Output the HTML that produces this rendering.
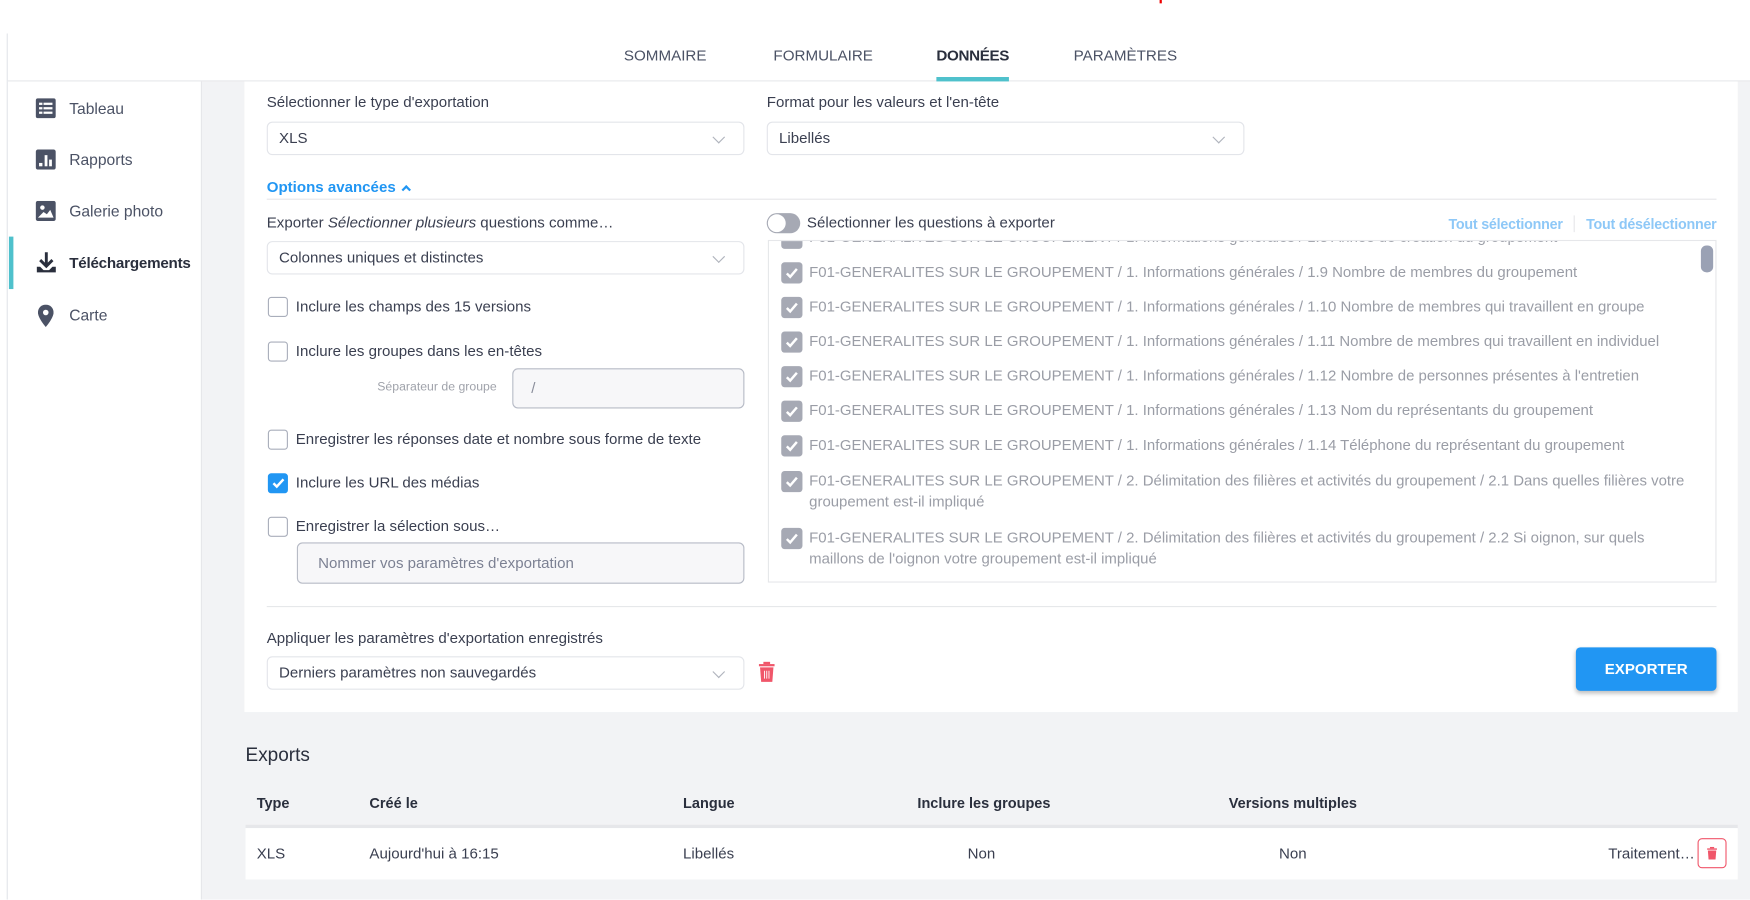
<!DOCTYPE html>
<html><head><meta charset="utf-8">
<style>
*{box-sizing:border-box;margin:0;padding:0}
html,body{width:1750px;height:899px;overflow:hidden;background:#fff}
#w{position:absolute;left:0;top:0;width:1568px;height:806px;transform:scale(1.11607);transform-origin:0 0;font-family:"Liberation Sans",sans-serif;color:#3a3f50;font-size:13.5px}
.a{position:absolute;white-space:nowrap}
.sel{position:absolute;border:1px solid #e3e5ea;border-radius:5px;background:#fff;height:30px;padding:0 10px;line-height:28px;color:#3a3f50}
.sel:after{content:"";position:absolute;right:18px;top:9px;width:7px;height:7px;border-right:1.3px solid #b0b4bd;border-bottom:1.3px solid #b0b4bd;transform:rotate(45deg)}
.cb{position:absolute;width:18px;height:18px;border:1.3px solid #a9aebb;border-radius:3px;background:#fff}
.cb.on{background:#2196f3;border-color:#2196f3}
.gc{position:absolute;width:19px;height:19px;border-radius:3px;background:#a6a9b4}
.gc svg,.cb svg{position:absolute;left:2px;top:2px}
.row{position:absolute;left:725px;color:#9a9da6;font-size:13.4px;white-space:nowrap}
.tab{position:absolute;top:42px;color:#4b5265;font-size:13.6px}
</style></head><body><div id="w">
<div class="a" style="left:1039px;top:0;width:2px;height:3px;background:#e00"></div>
<div class="a" style="left:6px;top:30px;width:1px;height:776px;background:#e3e5ea"></div>
<div class="a" style="left:7px;top:72px;width:1561px;height:1px;background:#e6e7ea"></div>
<!-- tabs -->
<div class="tab" style="left:559px">SOMMAIRE</div>
<div class="tab" style="left:693px">FORMULAIRE</div>
<div class="tab" style="left:839px;color:#2a2f3d;font-weight:bold;letter-spacing:-0.3px">DONNÉES</div>
<div class="tab" style="left:962px">PARAMÈTRES</div>
<div class="a" style="left:839px;top:69px;width:65px;height:4px;background:#4fc1cc"></div>
<!-- sidebar -->
<div class="a" style="left:180px;top:73px;width:1388px;height:733px;background:#f2f3f5"></div>
<div class="a" style="left:180px;top:73px;width:1px;height:733px;background:#e6e7ea"></div>
<div class="a" style="left:8px;top:212px;width:4px;height:47px;background:#4fc1cc"></div>
<svg class="a" style="left:32px;top:88px" width="18" height="18" viewBox="0 0 18 18"><rect width="18" height="18" rx="2" fill="#4b5265"/><g fill="#fff"><rect x="3" y="4" width="3" height="2"/><rect x="7" y="4" width="8" height="2"/><rect x="3" y="8" width="3" height="2"/><rect x="7" y="8" width="8" height="2"/><rect x="3" y="12" width="3" height="2"/><rect x="7" y="12" width="8" height="2"/></g></svg>
<div class="a" style="left:62px;top:89px;font-size:14px;color:#4b5265">Tableau</div>
<svg class="a" style="left:32px;top:134px" width="18" height="18" viewBox="0 0 18 18"><rect width="18" height="18" rx="2" fill="#4b5265"/><g fill="#fff"><rect x="3" y="12" width="3" height="3"/><rect x="8" y="5" width="2.5" height="10"/><rect x="12" y="9" width="2.5" height="6"/></g></svg>
<div class="a" style="left:62px;top:135px;font-size:14px;color:#4b5265">Rapports</div>
<svg class="a" style="left:32px;top:180px" width="18" height="18" viewBox="0 0 18 18"><rect width="18" height="18" rx="2" fill="#4b5265"/><circle cx="6" cy="6" r="2" fill="#fff"/><path d="M2 15 L7 10 L10 12 L13 8 L16 15Z" fill="#fff"/></svg>
<div class="a" style="left:62px;top:181px;font-size:14px;color:#4b5265">Galerie photo</div>
<svg class="a" style="left:32px;top:225px" width="19" height="20" viewBox="0 0 19 20"><path d="M9.5 1v12M4 8l5.5 5.5L15 8" stroke="#2a2f3d" stroke-width="2.6" fill="none"/><path d="M1 14v5h17v-5h-3l-3 3H7l-3-3z" fill="#2a2f3d"/></svg>
<div class="a" style="left:62px;top:228px;font-size:13.6px;font-weight:bold;color:#2a2f3d;letter-spacing:-0.2px">Téléchargements</div>
<svg class="a" style="left:34px;top:273px" width="14" height="20" viewBox="0 0 14 20"><path d="M7 0C3 0 0 3 0 7c0 5 7 13 7 13s7-8 7-13c0-4-3-7-7-7z" fill="#4b5265"/><circle cx="7" cy="7" r="2.5" fill="#fff"/></svg>
<div class="a" style="left:62px;top:274px;font-size:14px;color:#4b5265">Carte</div>
<!-- panel -->
<div class="a" style="left:219px;top:73px;width:1338px;height:565px;background:#fff"></div>
<div class="a" style="left:239px;top:84px">Sélectionner le type d'exportation</div>
<div class="sel" style="left:239px;top:109px;width:428px">XLS</div>
<div class="a" style="left:687px;top:84px">Format pour les valeurs et l'en-tête</div>
<div class="sel" style="left:687px;top:109px;width:428px">Libellés</div>
<div class="a" style="left:239px;top:160px;color:#2196f3;font-weight:bold">Options avancées <span style="display:inline-block;width:6px;height:6px;border-left:2px solid #2196f3;border-top:2px solid #2196f3;transform:rotate(45deg);margin-left:3px;vertical-align:-1px"></span></div>
<div class="a" style="left:239px;top:178px;width:1299px;height:1px;background:#e6e7ea"></div>
<div class="a" style="left:239px;top:192px">Exporter <i>Sélectionner plusieurs</i> questions comme…</div>
<div class="sel" style="left:239px;top:216px;width:428px">Colonnes uniques et distinctes</div>
<div class="cb" style="left:240px;top:266px"></div><div class="a" style="left:265px;top:267px">Inclure les champs des 15 versions</div>
<div class="cb" style="left:240px;top:306px"></div><div class="a" style="left:265px;top:307px">Inclure les groupes dans les en-têtes</div>
<div class="a" style="left:338px;top:341px;font-size:11px;color:#a0a3ab">Séparateur de groupe</div>
<div class="a" style="left:459px;top:330px;width:208px;height:36px;border:1px solid #b7bbc6;border-radius:5px;background:#f7f7f9;padding-left:16px;line-height:34px;color:#8a8e9b">/</div>
<div class="cb" style="left:240px;top:385px"></div><div class="a" style="left:265px;top:386px">Enregistrer les réponses date et nombre sous forme de texte</div>
<div class="cb on" style="left:240px;top:424px"><svg width="13" height="12" viewBox="0 0 13 12"><path d="M2 6l3 3 6-6.5" stroke="#fff" stroke-width="2.2" fill="none"/></svg></div><div class="a" style="left:265px;top:425px">Inclure les URL des médias</div>
<div class="cb" style="left:240px;top:463px"></div><div class="a" style="left:265px;top:464px">Enregistrer la sélection sous…</div>
<div class="a" style="left:266px;top:486px;width:401px;height:37px;border:1px solid #b7bbc6;border-radius:5px;background:#f7f7f9;padding-left:18px;line-height:35px;color:#7c8193">Nommer vos paramètres d'exportation</div>
<!-- right -->
<div class="a" style="left:687px;top:191px;width:30px;height:18px;border-radius:9px;background:#a6a9b4"></div>
<div class="a" style="left:688px;top:192px;width:16px;height:16px;border-radius:8px;background:#fff"></div>
<div class="a" style="left:723px;top:192px">Sélectionner les questions à exporter</div>
<div class="a" style="right:30px;top:193px;color:#8ec8f7;font-weight:bold;font-size:12.8px;letter-spacing:-0.2px">Tout sélectionner<span style="display:inline-block;width:1px;height:15px;background:#e6e7ea;margin:0 10px;vertical-align:-3px"></span>Tout désélectionner</div>
<div class="a" style="left:688px;top:215px;width:850px;height:307px;border:1px solid #e6e7ea;overflow:hidden;background:#fff">
<div class="a" style="left:835px;top:4px;width:11px;height:24px;border-radius:5px;background:#9aa1b4"></div>
</div>
<div class="a" style="left:689px;top:216px;width:835px;height:305px;overflow:hidden">
<div class="gc" style="left:11px;top:-12px"></div><div class="row" style="left:36px;top:-11px">F01-GENERALITES SUR LE GROUPEMENT / 1. Informations générales / 1.8 Année de création du groupement</div>
</div>
<div class="gc" style="left:700px;top:235px"><svg width="15" height="15" viewBox="0 0 15 15"><path d="M3 8l3 3 6-7" stroke="#fff" stroke-width="2.2" fill="none"/></svg></div><div class="row" style="top:236px">F01-GENERALITES SUR LE GROUPEMENT / 1. Informations générales / 1.9 Nombre de membres du groupement</div>
<div class="gc" style="left:700px;top:266px"><svg width="15" height="15" viewBox="0 0 15 15"><path d="M3 8l3 3 6-7" stroke="#fff" stroke-width="2.2" fill="none"/></svg></div><div class="row" style="top:267px">F01-GENERALITES SUR LE GROUPEMENT / 1. Informations générales / 1.10 Nombre de membres qui travaillent en groupe</div>
<div class="gc" style="left:700px;top:297px"><svg width="15" height="15" viewBox="0 0 15 15"><path d="M3 8l3 3 6-7" stroke="#fff" stroke-width="2.2" fill="none"/></svg></div><div class="row" style="top:298px">F01-GENERALITES SUR LE GROUPEMENT / 1. Informations générales / 1.11 Nombre de membres qui travaillent en individuel</div>
<div class="gc" style="left:700px;top:328px"><svg width="15" height="15" viewBox="0 0 15 15"><path d="M3 8l3 3 6-7" stroke="#fff" stroke-width="2.2" fill="none"/></svg></div><div class="row" style="top:329px">F01-GENERALITES SUR LE GROUPEMENT / 1. Informations générales / 1.12 Nombre de personnes présentes à l'entretien</div>
<div class="gc" style="left:700px;top:359px"><svg width="15" height="15" viewBox="0 0 15 15"><path d="M3 8l3 3 6-7" stroke="#fff" stroke-width="2.2" fill="none"/></svg></div><div class="row" style="top:360px">F01-GENERALITES SUR LE GROUPEMENT / 1. Informations générales / 1.13 Nom du représentants du groupement</div>
<div class="gc" style="left:700px;top:390px"><svg width="15" height="15" viewBox="0 0 15 15"><path d="M3 8l3 3 6-7" stroke="#fff" stroke-width="2.2" fill="none"/></svg></div><div class="row" style="top:391px">F01-GENERALITES SUR LE GROUPEMENT / 1. Informations générales / 1.14 Téléphone du représentant du groupement</div>
<div class="gc" style="left:700px;top:422px"><svg width="15" height="15" viewBox="0 0 15 15"><path d="M3 8l3 3 6-7" stroke="#fff" stroke-width="2.2" fill="none"/></svg></div><div class="row" style="top:423px">F01-GENERALITES SUR LE GROUPEMENT / 2. Délimitation des filières et activités du groupement / 2.1 Dans quelles filières votre</div><div class="row" style="top:442px">groupement est-il impliqué</div>
<div class="gc" style="left:700px;top:473px"><svg width="15" height="15" viewBox="0 0 15 15"><path d="M3 8l3 3 6-7" stroke="#fff" stroke-width="2.2" fill="none"/></svg></div><div class="row" style="top:474px">F01-GENERALITES SUR LE GROUPEMENT / 2. Délimitation des filières et activités du groupement / 2.2 Si oignon, sur quels</div><div class="row" style="top:493px">maillons de l'oignon votre groupement est-il impliqué</div>
<div class="a" style="left:239px;top:543px;width:1299px;height:1px;background:#e6e7ea"></div>
<div class="a" style="left:239px;top:564px">Appliquer les paramètres d'exportation enregistrés</div>
<div class="sel" style="left:239px;top:588px;width:428px">Derniers paramètres non sauvegardés</div>
<svg class="a" style="left:679px;top:592px" width="16" height="20" viewBox="0 0 16 20"><rect x="1" y="3" width="14" height="2" fill="#f0566a"/><rect x="5" y="1" width="6" height="2" fill="#f0566a"/><path d="M2 6h12l-1 13H3z" fill="#f0566a"/><path d="M6 9v7M8 9v7M10 9v7" stroke="#fff" stroke-width=".8"/></svg>
<div class="a" style="left:1412px;top:580px;width:126px;height:39px;background:#2196f3;border-radius:4px;box-shadow:0 2px 4px rgba(0,0,0,.25);color:#fff;font-weight:bold;text-align:center;line-height:39px;font-size:13.5px">EXPORTER</div>
<!-- exports -->
<div class="a" style="left:220px;top:667px;font-size:17px;color:#2a2f3d">Exports</div>
<div class="a" style="left:230px;top:712px;font-weight:bold;font-size:13px;color:#2a2f3d">Type</div>
<div class="a" style="left:331px;top:712px;font-weight:bold;font-size:13px;color:#2a2f3d">Créé le</div>
<div class="a" style="left:612px;top:712px;font-weight:bold;font-size:13px;color:#2a2f3d">Langue</div>
<div class="a" style="left:822px;top:712px;font-weight:bold;font-size:13px;color:#2a2f3d">Inclure les groupes</div>
<div class="a" style="left:1101px;top:712px;font-weight:bold;font-size:13px;color:#2a2f3d">Versions multiples</div>
<div class="a" style="left:220px;top:739px;width:1337px;height:3px;background:#e6e7ea"></div>
<div class="a" style="left:220px;top:742px;width:1337px;height:46px;background:#fff"></div>
<div class="a" style="left:230px;top:757px">XLS</div>
<div class="a" style="left:331px;top:757px">Aujourd'hui à 16:15</div>
<div class="a" style="left:612px;top:757px">Libellés</div>
<div class="a" style="left:867px;top:757px">Non</div>
<div class="a" style="left:1146px;top:757px">Non</div>
<div class="a" style="left:1441px;top:757px">Traitement…</div>
<div class="a" style="left:1521px;top:751px;width:26px;height:27px;border:1px solid #f0566a;border-radius:4px"></div>
<svg class="a" style="left:1529px;top:757px" width="10" height="15" viewBox="0 0 16 20"><rect x="1" y="3" width="14" height="2" fill="#f0566a"/><rect x="5" y="1" width="6" height="2" fill="#f0566a"/><path d="M2 6h12l-1 13H3z" fill="#f0566a"/></svg>
</div></body></html>
